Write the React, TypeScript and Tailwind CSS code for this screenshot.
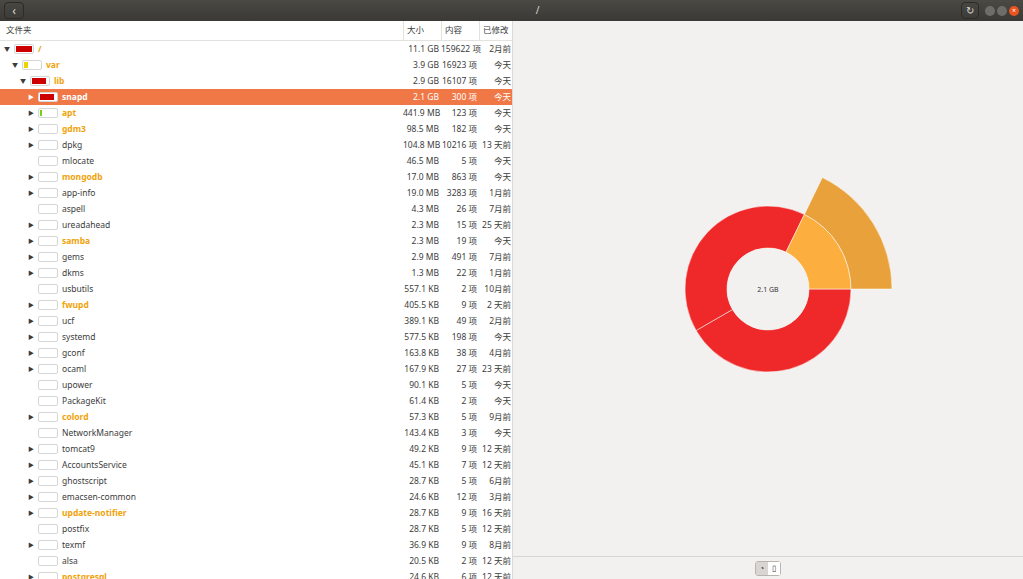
type Row = [number, string, string, string, string, boolean, boolean, string, number];
// depth, name, size, count, date, expander, highlighted name, bar color, bar width
const rows: Row[] = [
  [0, '/', '11.1 GB', '159622 项', '2月前', true, true, '#cc0000', 18],
  [1, 'var', '3.9 GB', '16923 项', '今天', true, true, '#edd400', 4],
  [2, 'lib', '2.9 GB', '16107 项', '今天', true, true, '#cc0000', 14],
  [3, 'snapd', '2.1 GB', '300 项', '今天', true, true, '#cc0000', 14],
  [3, 'apt', '441.9 MB', '123 项', '今天', true, true, '#73d216', 2],
  [3, 'gdm3', '98.5 MB', '182 项', '今天', true, true, '', 0],
  [3, 'dpkg', '104.8 MB', '10216 项', '13 天前', true, false, '', 0],
  [3, 'mlocate', '46.5 MB', '5 项', '今天', false, false, '', 0],
  [3, 'mongodb', '17.0 MB', '863 项', '今天', true, true, '', 0],
  [3, 'app-info', '19.0 MB', '3283 项', '1月前', true, false, '', 0],
  [3, 'aspell', '4.3 MB', '26 项', '7月前', false, false, '', 0],
  [3, 'ureadahead', '2.3 MB', '15 项', '25 天前', true, false, '', 0],
  [3, 'samba', '2.3 MB', '19 项', '今天', true, true, '', 0],
  [3, 'gems', '2.9 MB', '491 项', '7月前', true, false, '', 0],
  [3, 'dkms', '1.3 MB', '22 项', '1月前', true, false, '', 0],
  [3, 'usbutils', '557.1 KB', '2 项', '10月前', false, false, '', 0],
  [3, 'fwupd', '405.5 KB', '9 项', '2 天前', true, true, '', 0],
  [3, 'ucf', '389.1 KB', '49 项', '2月前', true, false, '', 0],
  [3, 'systemd', '577.5 KB', '198 项', '今天', true, false, '', 0],
  [3, 'gconf', '163.8 KB', '38 项', '4月前', true, false, '', 0],
  [3, 'ocaml', '167.9 KB', '27 项', '23 天前', true, false, '', 0],
  [3, 'upower', '90.1 KB', '5 项', '今天', false, false, '', 0],
  [3, 'PackageKit', '61.4 KB', '2 项', '今天', false, false, '', 0],
  [3, 'colord', '57.3 KB', '5 项', '9月前', true, true, '', 0],
  [3, 'NetworkManager', '143.4 KB', '3 项', '今天', false, false, '', 0],
  [3, 'tomcat9', '49.2 KB', '9 项', '12 天前', true, false, '', 0],
  [3, 'AccountsService', '45.1 KB', '7 项', '12 天前', true, false, '', 0],
  [3, 'ghostscript', '28.7 KB', '5 项', '6月前', true, false, '', 0],
  [3, 'emacsen-common', '24.6 KB', '12 项', '3月前', true, false, '', 0],
  [3, 'update-notifier', '28.7 KB', '9 项', '16 天前', true, true, '', 0],
  [3, 'postfix', '28.7 KB', '5 项', '12 天前', false, false, '', 0],
  [3, 'texmf', '36.9 KB', '9 项', '8月前', true, false, '', 0],
  [3, 'alsa', '20.5 KB', '2 项', '12 天前', false, false, '', 0],
  [3, 'postgresql', '24.6 KB', '6 项', '12 天前', true, true, '', 0],
];

function arc(cx: number, cy: number, r0: number, r1: number, a0: number, a1: number) {
  const p = (r: number, a: number) => {
    const t = ((a - 90) * Math.PI) / 180;
    return `${cx + r * Math.cos(t)} ${cy + r * Math.sin(t)}`;
  };
  const large = a1 - a0 > 180 ? 1 : 0;
  return `M ${p(r1, a0)} A ${r1} ${r1} 0 ${large} 1 ${p(r1, a1)} L ${p(r0, a1)} A ${r0} ${r0} 0 ${large} 0 ${p(r0, a0)} Z`;
}

export default function App() {
  return (
    <div className="flex flex-col w-[1023px] h-[579px] overflow-hidden text-[8.5px] text-[#3c3c3c]" style={{ fontFamily: '"Noto Sans","Noto Sans CJK SC",sans-serif' }}>
      <div className="h-[21px] flex items-center justify-between px-1 bg-gradient-to-b from-[#4a4944] to-[#3a3935] text-[#dfdbd2]">
        <div className="w-[20px] h-[17px] rounded-sm border border-[#2c2b28] flex items-center justify-center text-[12px]">‹</div>
        <span className="text-[10px] ml-[90px]">/</span>
        <div className="flex items-center gap-[6px]">
          <div className="w-[18px] h-[17px] rounded-sm border border-[#2c2b28] flex items-center justify-center text-[10px]">↻</div>
          <div className="flex gap-[2px]">
            <span className="w-[10px] h-[10px] rounded-full bg-[#6e6d69]" />
            <span className="w-[10px] h-[10px] rounded-full bg-[#6e6d69]" />
            <span className="w-[10px] h-[10px] rounded-full bg-[#e9541f] text-white text-[7px] leading-[10px] text-center">×</span>
          </div>
        </div>
      </div>
      <div className="flex flex-1 min-h-0">
        <div className="w-[513px] bg-white border-r border-[#dcdad5] flex flex-col">
          <div className="flex h-[20px] shrink-0 items-center border-b border-[#e4e2de]">
            <div className="flex-1 pl-[6px]">文件夹</div>
            <div className="w-[38px] pl-[3px] border-l border-[#e4e2de] h-full flex items-center">大小</div>
            <div className="w-[38px] pl-[3px] border-l border-[#e4e2de] h-full flex items-center">内容</div>
            <div className="w-[33px] pl-[3px] border-l border-[#e4e2de] h-full flex items-center">已修改</div>
          </div>
          {rows.map((r, i) => {
            const sel = i === 3;
            return (
              <div key={i} className={`flex h-[16px] shrink-0 items-center ${sel ? 'bg-[#f07746] text-white' : ''}`}>
                <div className="flex-1 flex items-center" style={{ paddingLeft: 4 + r[0] * 8 }}>
                  <span className="w-[10px] text-[6px]">{r[5] ? (i < 3 ? '▼' : '▶') : ''}</span>
                  <span className="w-[20px] h-[10px] border border-[#d6d6d6] rounded-[2px] bg-white flex items-center px-[1px] mr-[4px]">
                    {r[8] > 0 && <span className="h-[6px]" style={{ width: r[8], background: r[7] }} />}
                  </span>
                  <span className={sel ? 'font-bold' : r[6] ? 'font-bold text-[#f0a30a]' : ''}>{r[1]}</span>
                </div>
                <div className="w-[38px] text-right pr-[2px] whitespace-nowrap">{r[2]}</div>
                <div className="w-[38px] text-right pr-[2px] whitespace-nowrap">{r[3]}</div>
                <div className="w-[33px] text-right pr-[1px] whitespace-nowrap">{r[4]}</div>
              </div>
            );
          })}
        </div>
        <div className="flex-1 bg-[#f2f1f0] flex flex-col">
          <div className="flex-1 relative">
            <svg width="510" height="535" className="absolute left-0 top-0">
              <path d={arc(255, 268, 41, 83, 90, 240)} fill="#ef2929" stroke="#fff" strokeWidth="0.5" />
              <path d={arc(255, 268, 41, 83, 240, 386)} fill="#ef2929" stroke="#fff" strokeWidth="0.5" />
              <path d={arc(255, 268, 41, 83, 26, 90)} fill="#fcaf3e" stroke="#fff" strokeWidth="0.5" />
              <path d={arc(255, 268, 83, 124, 26, 90)} fill="#e9a23b" stroke="#fff" strokeWidth="0.5" />
              <circle cx="255" cy="268" r="41" fill="#f2f1f0" />
              <text x="255" y="271" textAnchor="middle" fontSize="7" fill="#333">2.1 GB</text>
            </svg>
          </div>
          <div className="h-[23px] border-t border-[#d8d6d2] flex items-center justify-center">
            <div className="flex border border-[#b8b5ae] rounded-[3px] h-[15px]">
              <span className="w-[12px] bg-[#d8d6d2] flex items-center justify-center text-[8px]">◔</span>
              <span className="w-[12px] bg-white flex items-center justify-center text-[8px]">▯</span>
            </div>
          </div>
        </div>
      </div>
    </div>
  );
}
